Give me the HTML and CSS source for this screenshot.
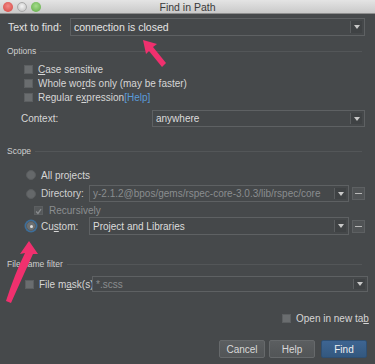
FILE: index.html
```html
<!DOCTYPE html>
<html>
<head>
<meta charset="utf-8">
<link rel="stylesheet" href="styles.css">
</head>
<body>
<div class="window">
  <div class="titlebar">
    <div class="lights">
      <span class="light red"></span>
      <span class="light gray"></span>
      <span class="light green"></span>
    </div>
    <div class="title">Find in Path</div>
  </div>

  <div class="row find-row">
    <span class="find-label">Text to find:</span>
    <div class="combo find-combo">
      <span class="combo-text bright">connection is closed</span>
      <span class="arrow-btn"><span class="tri"></span></span>
    </div>
  </div>

  <div class="section options-head"><span class="sec-title">Options</span><span class="sec-line"></span></div>

  <div class="row cb-row"><span class="cb"></span><span><u>C</u>ase sensitive</span></div>
  <div class="row cb-row"><span class="cb"></span><span>Whole wo<u>r</u>ds only (may be faster)</span></div>
  <div class="row cb-row"><span class="cb"></span><span>Regular e<u>x</u>pression<span class="link">[Help]</span></span></div>

  <div class="row context-row">
    <span class="context-label">Context:</span>
    <div class="combo context-combo">
      <span class="combo-text">anywhere</span>
      <span class="arrow-btn"><span class="tri"></span></span>
    </div>
  </div>

  <div class="section scope-head"><span class="sec-title">Scope</span><span class="sec-line"></span></div>

  <div class="row radio-row all-row"><span class="radio"></span><span>All projects</span></div>

  <div class="row radio-row dir-row">
    <span class="radio"></span><span class="radio-label">Directory:</span>
    <div class="combo dir-combo">
      <span class="combo-text dim">y-2.1.2@bpos/gems/rspec-core-3.0.3/lib/rspec/core</span>
      <span class="arrow-btn"><span class="tri"></span></span>
    </div>
    <span class="minus-btn"><span class="minus"></span></span>
  </div>

  <div class="row rec-row"><span class="cb checked"><svg viewBox="0 0 9 9" width="9" height="9"><path d="M1.5 4.5 L3.8 7 L7.8 1.5" fill="none" stroke="#8a8d8f" stroke-width="1.6"/></svg></span><span class="dim-label">Recursively</span></div>

  <div class="row radio-row custom-row">
    <span class="radio selected"><span class="dot"></span></span><span class="radio-label">Cu<u>s</u>tom:</span>
    <div class="combo custom-combo">
      <span class="combo-text">Project and Libraries</span>
      <span class="arrow-btn"><span class="tri"></span></span>
    </div>
    <span class="minus-btn"><span class="minus"></span></span>
  </div>

  <div class="section filter-head"><span class="sec-title">File name filter</span><span class="sec-line"></span></div>

  <div class="row mask-row">
    <span class="cb"></span><span class="mask-label">File m<u>a</u>sk(s)</span>
    <div class="combo mask-combo">
      <span class="combo-text dim">*.scss</span>
      <span class="arrow-btn"><span class="tri"></span></span>
    </div>
  </div>

  <div class="row newtab-row"><span class="cb"></span><span>Open in new ta<u>b</u></span></div>

  <div class="row buttons">
    <span class="btn">Cancel</span>
    <span class="btn">Help</span>
    <span class="btn primary">Find</span>
  </div>

  <svg class="annot" width="375" height="364" viewBox="0 0 375 364">
    <g fill="#f0306e" stroke="none">
      <path d="M143 40 L157 44 L153 47 L166 63 L162 67 L149 51 L146 54 Z"/>
      <path d="M29 241 L38 254 L33 254 Q23 276 11 303 L6 301 Q15 273 25 253 L20 254 Z"/>
    </g>
  </svg>
</div>
</body>
</html>
```

FILE: styles.css
```css
* { box-sizing: border-box; }
html, body { margin: 0; padding: 0; }
body {
  width: 375px;
  height: 364px;
  overflow: hidden;
  background: #46494b;
  font-family: "Liberation Sans", "DejaVu Sans", sans-serif;
  font-size: 10px;
  color: #d6d6d6;
}
u { text-decoration: underline; text-underline-offset: 1px; }
.window { position: relative; width: 375px; height: 364px; }

.titlebar {
  height: 14px;
  background: linear-gradient(#e4e4e4, #c9c9c9);
  border-bottom: 1px solid #8e8e8e;
  display: flex;
  align-items: center;
  position: relative;
}
.lights { display: flex; gap: 4px; padding-left: 3px; }
.light { width: 10px; height: 10px; border-radius: 50%; display: block; }
.light.red { background: radial-gradient(circle at 50% 40%, #f28a87, #d2413c); }
.light.gray { background: radial-gradient(circle at 50% 40%, #f4f4f4, #bdbdbd); border: 1px solid #a9a9a9; }
.light.green { background: radial-gradient(circle at 50% 40%, #a6dd8c, #5aa742); }
.title {
  position: absolute;
  left: 0; right: 0; top: 0;
  text-align: center;
  line-height: 14px;
  font-size: 10.5px;
  color: #3a3a3a;
}

.row { display: flex; align-items: center; white-space: nowrap; }

.find-row { margin-top: 4px; height: 18px; padding-left: 8px; }
.find-label { width: 62px; font-size: 10.5px; color: #e2e2e2; }
.combo {
  display: flex;
  align-items: center;
  border: 1px solid #5e6163;
  background: #45484a;
  height: 100%;
  position: relative;
}
.combo-text { flex: 1; padding-left: 3px; white-space: nowrap; overflow: hidden; color: #dcdcdc; }
.combo-text.bright { font-size: 10.5px; color: #e4e4e4; }
.combo-text.dim { color: #8a8d8f; }
.arrow-btn {
  width: 12px;
  height: calc(100% - 4px);
  margin-right: 2px;
  border-left: 1px solid #5a5d5f;
  background: #3f4244;
  display: flex;
  align-items: center;
  justify-content: center;
}
.tri {
  width: 0; height: 0;
  border-left: 3px solid transparent;
  border-right: 3px solid transparent;
  border-top: 4px solid #c8c8c8;
}
.find-combo { width: 295px; }

.section { display: flex; align-items: center; height: 12px; padding-left: 7px; padding-right: 13px; }
.sec-title { font-size: 8.5px; color: #cfcfcf; margin-right: 4px; white-space: nowrap; }
.sec-line { flex: 1; height: 1px; background: #3a3c3e; border-bottom: 1px solid #535658; }
.options-head { margin-top: 9px; }
.scope-head { margin-top: 18px; }
.filter-head { margin-top: 23px; }

.cb {
  width: 9px; height: 9px;
  background: #6a6d6f;
  border: 1px solid #5c5f61;
  display: inline-block;
  flex: none;
}
.cb.checked { background: #55585a; display: flex; }
.cb-row { height: 14px; padding-left: 24px; gap: 5px; }
.options-head + .cb-row { margin-top: 5px; }
.link { color: #5a9bd8; }

.context-row { margin-top: 6px; height: 17px; padding-left: 21px; }
.context-label { width: 131px; }
.context-combo { width: 213px; }

.radio {
  width: 10px; height: 10px; border-radius: 50%;
  background: #65686a;
  border: 1px solid #5a5d5f;
  flex: none;
  display: flex; align-items: center; justify-content: center;
}
.radio.selected { background: #6d7072; box-shadow: 0 0 0 1.5px #3c6e9a; }
.dot { width: 3px; height: 3px; border-radius: 50%; background: #e0e0e0; }
.radio-row { padding-left: 26px; }
.radio-row > .radio { margin-right: 5px; }
.radio-label { width: 48px; }
.all-row { margin-top: 11px; height: 14px; }
.dir-row { margin-top: 3px; height: 17px; }
.dir-row .radio-label { color: #d0d0d0; }
.dir-combo, .custom-combo { width: 260px; }
.minus-btn {
  width: 13px; height: 13px; margin-left: 3px;
  background: #505355;
  border: 1px solid #5d6062;
  display: flex; align-items: center; justify-content: center;
}
.minus { width: 7px; height: 1px; background: #b8b8b8; }
.rec-row { margin-top: 1px; height: 14px; padding-left: 34px; gap: 6px; }
.dim-label { color: #8b8e90; }
.custom-row { height: 18px; }

.mask-row { margin-top: 6px; height: 16px; padding-left: 25px; }
.mask-row .cb { margin-right: 5px; }
.mask-label { width: 53px; flex: none; white-space: nowrap; }
.mask-combo { width: 276px; }

.newtab-row { margin-top: 19px; height: 14px; padding-left: 282px; gap: 5px; }

.buttons { margin-top: 15px; height: 18px; padding-left: 219px; gap: 4px; }
.btn {
  width: 46px; height: 18px;
  display: flex; align-items: center; justify-content: center;
  background: linear-gradient(#5b5e60, #525557);
  border: 1px solid #66696b;
  border-radius: 2px;
  color: #d8d8d8;
}
.btn.primary {
  margin-left: 2px;
  background: linear-gradient(#3e6592, #33587f);
  border-color: #2f4f72;
  color: #f0f0f0;
}

.annot { position: absolute; left: 0; top: 0; pointer-events: none; }
```
